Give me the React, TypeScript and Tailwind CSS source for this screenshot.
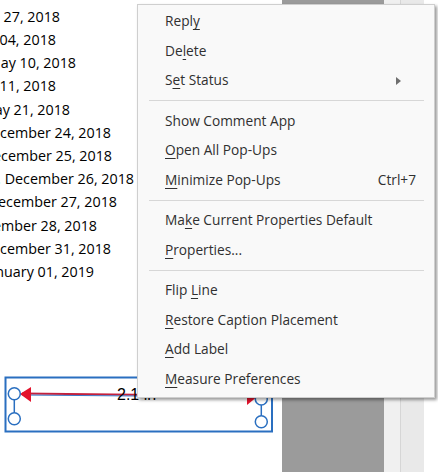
import React from "react";

const dates: { text: string; right: number }[] = [
  { text: "Wednesday, June 27, 2018", right: 60 },
  { text: "Wednesday, July 04, 2018", right: 56 },
  { text: "Thursday, May 10, 2018", right: 76 },
  { text: "Monday, June 11, 2018", right: 56 },
  { text: "Monday, May 21, 2018", right: 70 },
  { text: "Monday, December 24, 2018", right: 111 },
  { text: "Tuesday, December 25, 2018", right: 112 },
  { text: "Wednesday, December 26, 2018", right: 134 },
  { text: "Thursday, December 27, 2018", right: 117 },
  { text: "Friday, December 28, 2018", right: 97 },
  { text: "Monday, December 31, 2018", right: 111 },
  { text: "Tuesday, January 01, 2019", right: 94 },
];

type Item = {
  pre: string;
  key?: string;
  post?: string;
  shortcut?: string;
  sub?: boolean;
};

const groups: Item[][] = [
  [
    { pre: "Repl", key: "y", post: "" },
    { pre: "De", key: "l", post: "ete" },
    { pre: "S", key: "e", post: "t Status", sub: true },
  ],
  [
    { pre: "Show Comment App" },
    { pre: "", key: "O", post: "pen All Pop-Ups" },
    { pre: "", key: "M", post: "inimize Pop-Ups", shortcut: "Ctrl+7" },
  ],
  [
    { pre: "Ma", key: "k", post: "e Current Properties Default" },
    { pre: "", key: "P", post: "roperties..." },
  ],
  [
    { pre: "Flip ", key: "L", post: "ine" },
    { pre: "", key: "R", post: "estore Caption Placement" },
    { pre: "", key: "A", post: "dd Label" },
    { pre: "", key: "M", post: "easure Preferences" },
  ],
];

function MenuItem({ item }: { item: Item }) {
  return (
    <div className="h-[29.5px] flex items-center pl-[27px] text-[#303030]">
      <span className="whitespace-nowrap">
        {item.pre}
        {item.key ? (
          <span className="underline underline-offset-[3px] decoration-[1px]">{item.key}</span>
        ) : null}
        {item.post}
      </span>
      {item.shortcut ? (
        <span className="ml-auto mr-[18px]">{item.shortcut}</span>
      ) : null}
      {item.sub ? (
        <svg className="ml-auto mr-[33px]" width="5" height="8" viewBox="0 0 5 8">
          <path d="M0 0 L5 4 L0 8 Z" fill="#6f6f6f" />
        </svg>
      ) : null}
    </div>
  );
}

export default function App() {
  return (
    <div
      className="relative w-[438px] h-[472px] overflow-hidden flex bg-white"
      style={{ fontFamily: '"Open Sans", "Noto Sans", sans-serif' }}
    >
      {/* canvas */}
      <div className="w-[282px] h-full bg-white flex flex-col">
        <div className="pt-[5px] flex flex-col text-[14.3px] text-black">
          {dates.map((d, i) => (
            <div
              key={i}
              className="h-[23.2px] flex items-center justify-end overflow-hidden whitespace-nowrap"
              style={{ width: d.right }}
            >
              <span className="shrink-0">{d.text}</span>
            </div>
          ))}
        </div>
        <svg className="mt-[86.6px] shrink-0" width="282" height="80" viewBox="0 0 282 80">
          <rect x="5.5" y="7.5" width="266.5" height="54" fill="white" stroke="#2a6fc0" strokeWidth="2" />
          {/* measurement line */}
          <line x1="22" y1="23.5" x2="250" y2="26" stroke="#c4203c" strokeWidth="2" />
          <line x1="22" y1="25" x2="250" y2="27" stroke="#3a78c8" strokeWidth="1" />
          {/* left arrow */}
          <polygon points="20,24 31,17 31,32" fill="#e3132c" />
          {/* right arrow */}
          <polygon points="258,26 247,19 247,35" fill="#e3132c" />
          {/* left handle */}
          <line x1="14.3" y1="23.7" x2="14.3" y2="48.7" stroke="#2a6fc0" strokeWidth="1.5" />
          <circle cx="14.3" cy="23.7" r="6" fill="white" stroke="#2a6fc0" strokeWidth="1.5" />
          <circle cx="14.3" cy="48.7" r="6" fill="white" stroke="#2a6fc0" strokeWidth="1.5" />
          {/* right handle */}
          <line x1="261.3" y1="29" x2="261.3" y2="51.7" stroke="#2a6fc0" strokeWidth="1.5" />
          <circle cx="261.3" cy="29" r="6" fill="white" stroke="#2a6fc0" strokeWidth="1.5" />
          <circle cx="261.3" cy="51.7" r="6" fill="white" stroke="#2a6fc0" strokeWidth="1.5" />
          <text x="117" y="30" fontSize="16" fill="#000" style={{ fontFamily: '"Liberation Sans", Arial, sans-serif' }}>
            2.1 in
          </text>
        </svg>
      </div>
      {/* gray strip */}
      <div className="w-[102px] h-full bg-[#9b9b9b]" />
      <div className="w-[17px] h-full bg-[#f0f0f0] border-r border-[#d6d6d6]" />
      <div className="w-[23px] h-full bg-[#e9e9e9]" />
      <div className="flex-1 h-full bg-white" />

      {/* context menu */}
      <div className="absolute left-[137px] top-[4px] w-[298px] h-[394px] bg-[#f9f9f9] border border-[#cfcfcf] shadow-[2px_2px_3px_rgba(0,0,0,0.4)] pt-[2px] text-[13.7px] flex flex-col">
        {groups.map((g, gi) => (
          <React.Fragment key={gi}>
            {gi > 0 ? (
              <div className="mt-[4.5px] mb-[5.5px] ml-[11px] mr-[10px] h-px bg-[#d7d7d7]" />
            ) : null}
            {g.map((it, ii) => (
              <MenuItem key={ii} item={it} />
            ))}
          </React.Fragment>
        ))}
      </div>
    </div>
  );
}
